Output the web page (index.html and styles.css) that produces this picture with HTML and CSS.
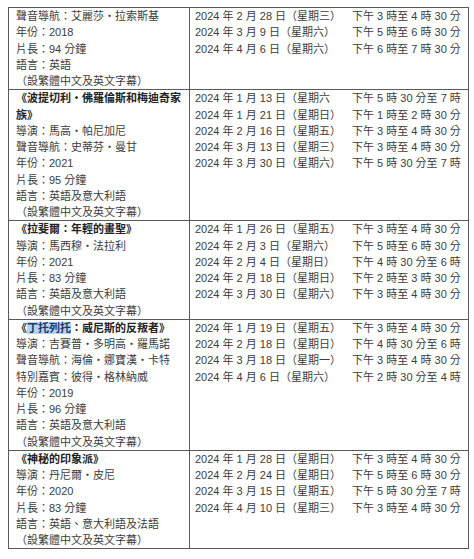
FILE: index.html
```html
<!DOCTYPE html>
<html lang="zh-Hant">
<head>
<meta charset="utf-8">
<title>節目表</title>
<link rel="stylesheet" href="styles.css">
</head>
<body>
<table class="sched-table">
  <colgroup>
    <col class="col-info">
    <col class="col-slots">
  </colgroup>
  <tr>
    <td class="info">
      <div>聲音導航：艾麗莎・拉索斯基</div>
      <div>年份：2018</div>
      <div>片長：94 分鐘</div>
      <div>語言：英語</div>
      <div class="sub">（設繁體中文及英文字幕）</div>
    </td>
    <td class="slots">
      <div class="grid">
        <span>2024 年 2 月 28 日（星期三）</span><span>下午 3 時至 4 時 30 分</span>
        <span>2024 年 3 月 9 日（星期六）</span><span>下午 5 時至 6 時 30 分</span>
        <span>2024 年 4 月 6 日（星期六）</span><span>下午 6 時至 7 時 30 分</span>
      </div>
    </td>
  </tr>
  <tr>
    <td class="info">
      <div class="title">《波提切利・佛羅倫斯和梅迪奇家族》</div>
      <div>導演：馬高・帕尼加尼</div>
      <div>聲音導航：史蒂芬・曼甘</div>
      <div>年份：2021</div>
      <div>片長：95 分鐘</div>
      <div>語言：英語及意大利語</div>
      <div class="sub">（設繁體中文及英文字幕）</div>
    </td>
    <td class="slots">
      <div class="grid">
        <span>2024 年 1 月 13 日（星期六</span><span>下午 5 時 30 分至 7 時</span>
        <span>2024 年 1 月 21 日（星期日）</span><span>下午 1 時至 2 時 30 分</span>
        <span>2024 年 2 月 16 日（星期五）</span><span>下午 3 時至 4 時 30 分</span>
        <span>2024 年 3 月 13 日（星期三）</span><span>下午 3 時至 4 時 30 分</span>
        <span>2024 年 3 月 30 日（星期六）</span><span>下午 5 時 30 分至 7 時</span>
      </div>
    </td>
  </tr>
  <tr>
    <td class="info">
      <div class="title">《拉斐爾：年輕的畫聖》</div>
      <div>導演：馬西穆・法拉利</div>
      <div>年份：2021</div>
      <div>片長：83 分鐘</div>
      <div>語言：英語及意大利語</div>
      <div class="sub">（設繁體中文及英文字幕）</div>
    </td>
    <td class="slots">
      <div class="grid">
        <span>2024 年 1 月 26 日（星期五）</span><span>下午 3 時至 4 時 30 分</span>
        <span>2024 年 2 月 3 日（星期六）</span><span>下午 5 時至 6 時 30 分</span>
        <span>2024 年 2 月 4 日（星期日）</span><span>下午 4 時 30 分至 6 時</span>
        <span>2024 年 2 月 18 日（星期日）</span><span>下午 2 時至 3 時 30 分</span>
        <span>2024 年 3 月 30 日（星期六）</span><span>下午 3 時至 4 時 30 分</span>
      </div>
    </td>
  </tr>
  <tr>
    <td class="info">
      <div class="title">《<span class="hl">丁托列托</span>：威尼斯的反叛者》</div>
      <div>導演：吉賽普・多明高・羅馬諾</div>
      <div>聲音導航：海倫・娜寶漢・卡特</div>
      <div>特別嘉賓：彼得・格林納威</div>
      <div>年份：2019</div>
      <div>片長：96 分鐘</div>
      <div>語言：英語及意大利語</div>
      <div class="sub">（設繁體中文及英文字幕）</div>
    </td>
    <td class="slots">
      <div class="grid">
        <span>2024 年 1 月 19 日（星期五）</span><span>下午 3 時至 4 時 30 分</span>
        <span>2024 年 2 月 18 日（星期日）</span><span>下午 4 時 30 分至 6 時</span>
        <span>2024 年 3 月 18 日（星期一）</span><span>下午 3 時至 4 時 30 分</span>
        <span>2024 年 4 月 6 日（星期六）</span><span>下午 2 時 30 分至 4 時</span>
      </div>
    </td>
  </tr>
  <tr>
    <td class="info">
      <div class="title">《神秘的印象派》</div>
      <div>導演：丹尼爾・皮尼</div>
      <div>年份：2020</div>
      <div>片長：83 分鐘</div>
      <div>語言：英語、意大利語及法語</div>
      <div class="sub">（設繁體中文及英文字幕）</div>
    </td>
    <td class="slots">
      <div class="grid">
        <span>2024 年 1 月 28 日（星期日）</span><span>下午 3 時至 4 時 30 分</span>
        <span>2024 年 2 月 24 日（星期日）</span><span>下午 5 時至 6 時 30 分</span>
        <span>2024 年 3 月 15 日（星期五）</span><span>下午 5 時 30 分至 7 時</span>
        <span>2024 年 4 月 10 日（星期三）</span><span>下午 3 時至 4 時 30 分</span>
      </div>
    </td>
  </tr>
</table>
</body>
</html>
```

FILE: styles.css
```css
html, body {
  background: #ffffff;
}
body {
  margin: 7px 0 0 8px;
  font-family: "Liberation Sans", "Noto Sans CJK TC", sans-serif;
  font-size: 11px;
  line-height: 16.25px;
  color: #3c3c3c;
}
.sched-table {
  border-collapse: collapse;
  width: 460px;
  table-layout: fixed;
}
.col-info {
  width: 181px;
}
.col-slots {
  width: 279px;
}
.sched-table td {
  border: 1px solid #5a5a5a;
  vertical-align: top;
  padding: 0;
}
.info {
  padding-left: 7px !important;
  white-space: nowrap;
  overflow: hidden;
}
.info .title {
  white-space: normal;
  font-weight: bold;
  color: #222222;
  padding-right: 4px;
}
.slots {
  padding-left: 5px !important;
}
.grid {
  display: grid;
  grid-template-columns: 157px 1fr;
  white-space: nowrap;
}
.hl {
  background: #b4d3f2;
  color: #1f3a66;
}
```
